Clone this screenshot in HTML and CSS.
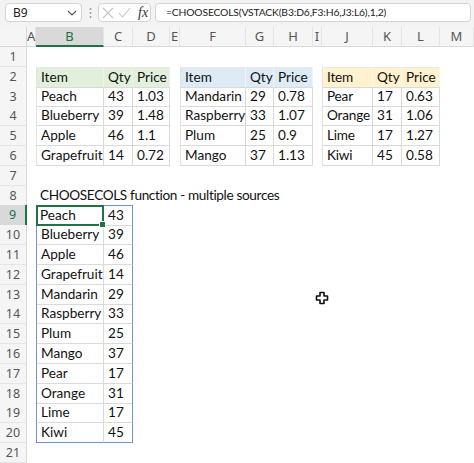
FILE: index.html
```html
<!DOCTYPE html>
<html>
<head>
<meta charset="utf-8">
<link rel="stylesheet" href="styles.css">
</head>
<body>
<div class="app">
  <div class="fbar">
    <div class="namebox"><span>B9</span>
      <svg class="chev" width="10" height="6" viewBox="0 0 10 6"><path d="M1 1 L5 5 L9 1" fill="none" stroke="#555" stroke-width="1.2"/></svg>
    </div>
    <svg class="dots" width="3" height="12" viewBox="0 0 3 12"><circle cx="1.5" cy="2" r="1" fill="#999"/><circle cx="1.5" cy="6" r="1" fill="#999"/><circle cx="1.5" cy="10" r="1" fill="#999"/></svg>
    <div class="fxbox">
      <svg width="12" height="12" viewBox="0 0 12 12"><path d="M1 1 L11 11 M11 1 L1 11" stroke="#c4c4c4" stroke-width="1.1" fill="none"/></svg>
      <svg width="13" height="11" viewBox="0 0 13 11"><path d="M1 6 L4.5 10 L12 1" stroke="#c4c4c4" stroke-width="1.1" fill="none"/></svg>
      <span class="fx">fx</span>
    </div>
    <div class="formula">=CHOOSECOLS(VSTACK(B3:D6,F3:H6,J3:L6),1,2)</div>
  </div>

  <div class="sheet">
    <div class="hrow">
      <div class="corner"></div>
      <div class="ch">A</div><div class="ch sel">B</div><div class="ch">C</div><div class="ch">D</div><div class="ch">E</div><div class="ch">F</div><div class="ch">G</div><div class="ch">H</div><div class="ch">I</div><div class="ch">J</div><div class="ch">K</div><div class="ch">L</div><div class="ch">M</div>
    </div>

    <div class="row"><div class="rh">1</div></div>
    <div class="row"><div class="rh">2</div>
      <div class="c cB t first top g">Item</div><div class="c cC t top g">Qty</div><div class="c cD t top g">Price</div>
      <div class="c cF t first top b">Item</div><div class="c cG t top b">Qty</div><div class="c cH t top b">Price</div>
      <div class="c cJ t first top y">Item</div><div class="c cK t top y">Qty</div><div class="c cL t top y">Price</div>
    </div>
    <div class="row"><div class="rh">3</div>
      <div class="c cB t first">Peach</div><div class="c cC t">43</div><div class="c cD t">1.03</div>
      <div class="c cF t first">Mandarin</div><div class="c cG t">29</div><div class="c cH t">0.78</div>
      <div class="c cJ t first">Pear</div><div class="c cK t">17</div><div class="c cL t">0.63</div>
    </div>
    <div class="row"><div class="rh">4</div>
      <div class="c cB t first">Blueberry</div><div class="c cC t">39</div><div class="c cD t">1.48</div>
      <div class="c cF t first">Raspberry</div><div class="c cG t">33</div><div class="c cH t">1.07</div>
      <div class="c cJ t first">Orange</div><div class="c cK t">31</div><div class="c cL t">1.06</div>
    </div>
    <div class="row"><div class="rh">5</div>
      <div class="c cB t first">Apple</div><div class="c cC t">46</div><div class="c cD t">1.1</div>
      <div class="c cF t first">Plum</div><div class="c cG t">25</div><div class="c cH t">0.9</div>
      <div class="c cJ t first">Lime</div><div class="c cK t">17</div><div class="c cL t">1.27</div>
    </div>
    <div class="row"><div class="rh">6</div>
      <div class="c cB t first">Grapefruit</div><div class="c cC t">14</div><div class="c cD t">0.72</div>
      <div class="c cF t first">Mango</div><div class="c cG t">37</div><div class="c cH t">1.13</div>
      <div class="c cJ t first">Kiwi</div><div class="c cK t">45</div><div class="c cL t">0.58</div>
    </div>
    <div class="row"><div class="rh">7</div></div>
    <div class="row"><div class="rh">8</div>
      <div class="c cB over">CHOOSECOLS function - multiple sources</div>
    </div>
    <div class="row"><div class="rh sel">9</div>
      <div class="c cB s sl st active">Peach</div><div class="c cC s sr st">43</div>
    </div>
    <div class="row"><div class="rh">10</div><div class="c cB s sl">Blueberry</div><div class="c cC s sr">39</div></div>
    <div class="row"><div class="rh">11</div><div class="c cB s sl">Apple</div><div class="c cC s sr">46</div></div>
    <div class="row"><div class="rh">12</div><div class="c cB s sl">Grapefruit</div><div class="c cC s sr">14</div></div>
    <div class="row"><div class="rh">13</div><div class="c cB s sl">Mandarin</div><div class="c cC s sr">29</div></div>
    <div class="row"><div class="rh">14</div><div class="c cB s sl">Raspberry</div><div class="c cC s sr">33</div></div>
    <div class="row"><div class="rh">15</div><div class="c cB s sl">Plum</div><div class="c cC s sr">25</div></div>
    <div class="row"><div class="rh">16</div><div class="c cB s sl">Mango</div><div class="c cC s sr">37</div></div>
    <div class="row"><div class="rh">17</div><div class="c cB s sl">Pear</div><div class="c cC s sr">17</div></div>
    <div class="row"><div class="rh">18</div><div class="c cB s sl">Orange</div><div class="c cC s sr">31</div></div>
    <div class="row"><div class="rh">19</div><div class="c cB s sl">Lime</div><div class="c cC s sr">17</div></div>
    <div class="row"><div class="rh">20</div><div class="c cB s sl sb">Kiwi</div><div class="c cC s sr sb">45</div></div>
    <div class="row"><div class="rh">21</div></div>
  </div>

  <svg class="cursor" width="14" height="14" viewBox="0 0 14 14"><path d="M5 1.5 H9 V5 H12.5 V9 H9 V12.5 H5 V9 H1.5 V5 H5 Z" fill="#fff" stroke="#111" stroke-width="1.6" stroke-linejoin="round"/></svg>
</div>
</body>
</html>
```

FILE: styles.css
```css
* { box-sizing: border-box; }
html, body { margin: 0; padding: 0; background: #fff; }
.app {
  position: relative;
  width: 474px;
  height: 463px;
  overflow: hidden;
  font-family: "Noto Sans", "Open Sans", sans-serif;
}

/* formula bar */
.fbar {
  height: 27px;
  background: #f3f3f3;
  display: flex;
  align-items: flex-start;
  padding: 3px 0 0 5px;
}
.namebox {
  width: 77px;
  height: 19px;
  background: #fff;
  border: 1px solid #d4d4d4;
  border-radius: 4px;
  display: flex;
  align-items: center;
  justify-content: space-between;
  padding: 0 4px 0 7px;
  font-size: 12px;
  color: #222;
}
.chev { margin-top: 1px; }
.dots { margin: 4px 6px 0 7px; }
.fxbox {
  width: 53px;
  height: 19px;
  background: #fff;
  border: 1px solid #d4d4d4;
  border-radius: 4px;
  display: flex;
  align-items: center;
  gap: 4px;
  padding-left: 3px;
}
.fx {
  font-family: "Liberation Serif", "DejaVu Serif", serif;
  font-style: italic;
  font-size: 14px;
  color: #333;
  margin-left: 3px;
}
.formula {
  flex: 1;
  margin-left: 4px;
  margin-right: 3px;
  height: 19px;
  background: #fff;
  border: 1px solid #d4d4d4;
  border-radius: 4px;
  font-family: "Lato", "Noto Sans", sans-serif;
  font-size: 10.3px;
  letter-spacing: -0.15px;
  line-height: 17px;
  padding-left: 10px;
  color: #222;
  white-space: nowrap;
  overflow: hidden;
}

/* sheet grid */
.sheet {
  --cols: 27px 9px 68px 29px 37px 10px 66px 28px 39px 9px 51px 29px 38px 1fr;
}
.hrow {
  display: grid;
  grid-template-columns: var(--cols);
  height: 20px;
  background: #f5f5f5;
  border-bottom: 1px solid #d8d8d8;
}
.corner { border-right: 1px solid #d8d8d8; }
.ch {
  font-size: 13px;
  color: #555;
  text-align: center;
  line-height: 19px;
  border-right: 1px solid #e4e4e4;
  white-space: nowrap;
}
.ch.sel {
  background: #d9d9d9;
  color: #1a7343;
  border-bottom: 2px solid #217346;
  line-height: 18px;
}

.row {
  display: grid;
  grid-template-columns: var(--cols);
  height: 19.8px;
}
.rh {
  grid-column: 1;
  background: #f5f5f5;
  border-right: 1px solid #d8d8d8;
  border-bottom: 1px solid #e6e6e6;
  text-align: center;
  font-size: 12.5px;
  color: #555;
  line-height: 19px;
}
.rh.sel {
  background: #d9d9d9;
  color: #1a7343;
  border-right: 2px solid #217346;
}

.c {
  font-family: "Lato", "Liberation Sans", sans-serif;
  font-size: 13.6px;
  color: #111;
  padding-left: 4px;
  line-height: 19px;
  white-space: nowrap;
}
.cB { grid-column: 3; }
.cC { grid-column: 4; }
.cD { grid-column: 5; }
.cF { grid-column: 7; }
.cG { grid-column: 8; }
.cH { grid-column: 9; }
.cJ { grid-column: 11; }
.cK { grid-column: 12; }
.cL { grid-column: 13; }

/* source tables */
.t {
  border-right: 1px solid #dadada;
  border-bottom: 1px solid #dadada;
}
.t.first { border-left: 1px solid #e2e2e2; }
.t.top { border-top: 1px solid #e8e8e8; border-right-color: #eef3ea; }
.g { background: #e2efda; }
.b { background: #ddebf7; border-right-color: #eef4fa !important; }
.y { background: #fff2cc; border-right-color: #fff8e6 !important; }
.cJ.t { letter-spacing: -0.2px; }

.over { overflow: visible; letter-spacing: -0.35px; }

/* spill range */
.s {
  border-bottom: 1px solid #dadada;
  border-right: 1px solid #dadada;
}
.sl { border-left: 1.5px solid #6f90d6; }
.sr { border-right: 1.5px solid #6f90d6; }
.st { border-top: 1.5px solid #6f90d6; }
.sb { border-bottom: 1.5px solid #6f90d6; }

.active {
  position: relative;
  border: 2px solid #217346;
  padding-left: 2px;
  line-height: 16px;
}
.active::after {
  content: "";
  position: absolute;
  right: -4px;
  bottom: -4px;
  width: 5px;
  height: 5px;
  background: #217346;
  border: 1px solid #fff;
}

.cursor {
  position: absolute;
  left: 315px;
  top: 291px;
}
```
